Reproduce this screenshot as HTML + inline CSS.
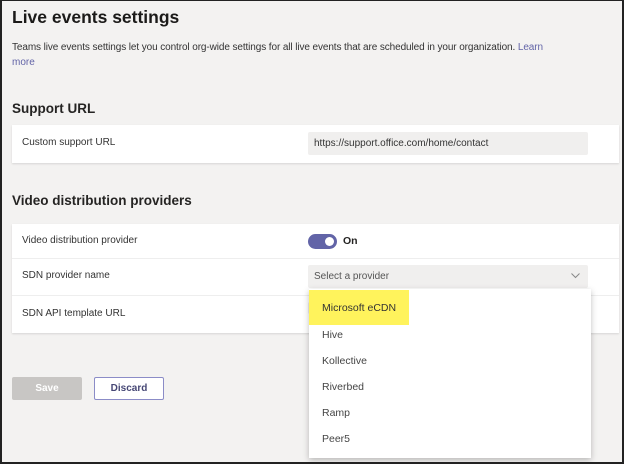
<!DOCTYPE html>
<html><head><style>
*{margin:0;padding:0;box-sizing:border-box}
body{width:624px;height:464px;overflow:hidden;background:#f3f2f1;font-family:"Liberation Sans",sans-serif;color:#252423;position:relative}
.frame{position:absolute;inset:0;border:2px solid #222;border-top-width:1px}
.a{position:absolute;white-space:nowrap}
.card{position:absolute;left:12px;width:607px;background:#fff;box-shadow:0 1px 2px rgba(0,0,0,.12)}
.lbl{font-size:10px;color:#333}
.inp{position:absolute;left:308px;width:280px;height:23px;background:#f0efee;border-radius:2px;font-size:10px;padding:6px 6px;color:#333}
.dd{position:absolute;left:309px;top:289px;width:282px;height:169px;background:#fff;box-shadow:0 2px 6px rgba(0,0,0,.25)}
.it{position:absolute;left:13px;font-size:10.5px;color:#444}
</style></head><body>
<div class="a" style="left:12px;top:7px;font-size:17.5px;font-weight:bold;color:#1b1a19">Live events settings</div>
<div class="a" style="left:12px;top:42px;font-size:10px;letter-spacing:-0.1px;color:#333">Teams live events settings let you control org-wide settings for all live events that are scheduled in your organization. <span style="color:#6264a7">Learn</span></div>
<div class="a" style="left:12px;top:57px;font-size:10px;color:#6264a7">more</div>
<div class="a" style="left:12px;top:101px;font-size:13.5px;font-weight:bold">Support URL</div>
<div class="card" style="top:125px;height:38px">
<div class="a lbl" style="left:10px;top:12px">Custom support URL</div>
</div>
<div class="inp" style="top:132px">https://support.office.com/home/contact</div>
<div class="a" style="left:12px;top:193px;font-size:13.5px;font-weight:bold">Video distribution providers</div>
<div class="card" style="top:224px;height:109px">
<div class="a lbl" style="left:10px;top:11px">Video distribution provider</div>
<div style="position:absolute;left:0;right:0;top:34px;border-top:1px solid #eee"></div>
<div class="a lbl" style="left:10px;top:46px">SDN provider name</div>
<div style="position:absolute;left:0;right:0;top:71px;border-top:1px solid #eee"></div>
<div class="a lbl" style="left:10px;top:84px">SDN API template URL</div>
</div>
<div style="position:absolute;left:308px;top:234px;width:29px;height:15px;border-radius:8px;background:#6264a7"><div style="position:absolute;right:3px;top:3px;width:9px;height:9px;border-radius:50%;background:#fff"></div></div>
<div class="a" style="left:343px;top:235px;font-size:10.5px;font-weight:bold">On</div>
<div class="inp" style="top:265px;color:#555">Select a provider
<svg style="position:absolute;right:8px;top:8px" width="9" height="6" viewBox="0 0 9 6"><path d="M0.5 0.5L4.5 4.5L8.5 0.5" fill="none" stroke="#888" stroke-width="1"/></svg></div>
<div class="inp" style="top:302px;height:12px;padding:0"></div>
<div style="position:absolute;left:12px;top:377px;width:70px;height:23px;background:#c8c6c4;border-radius:2px;color:#fff;font-size:10px;font-weight:bold;text-align:center;line-height:23px">Save</div>
<div style="position:absolute;left:94px;top:377px;width:70px;height:23px;border:1px solid #8b8cc7;border-radius:2px;color:#464775;font-size:10px;font-weight:bold;text-align:center;line-height:21px;background:#fff">Discard</div>
<div class="dd">
<div style="position:absolute;left:0;top:1px;width:100px;height:35px;background:#fff35c"></div>
<div class="it" style="top:13px;color:#333">Microsoft eCDN</div>
<div class="it" style="top:40px">Hive</div>
<div class="it" style="top:66px">Kollective</div>
<div class="it" style="top:92px">Riverbed</div>
<div class="it" style="top:118px">Ramp</div>
<div class="it" style="top:144px">Peer5</div>
</div>
<div class="frame"></div>
</body></html>
